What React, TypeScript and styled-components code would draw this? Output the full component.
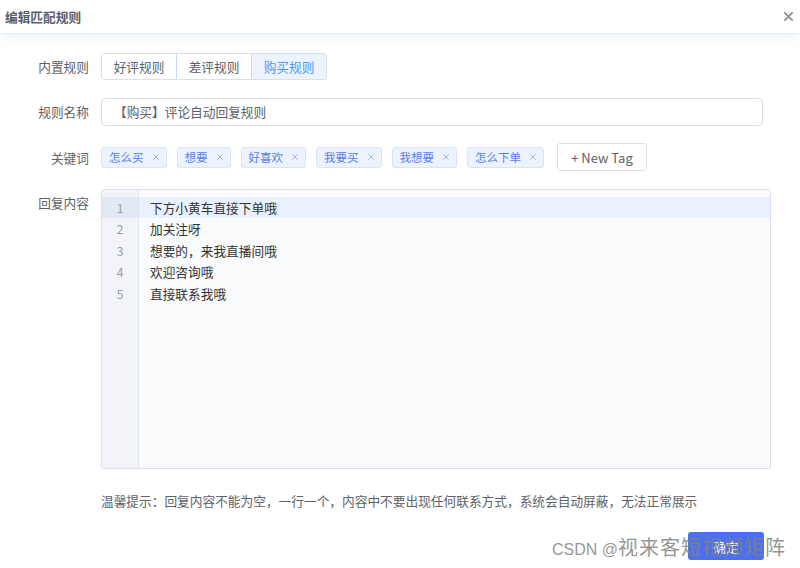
import styled, { createGlobalStyle } from 'styled-components';

const GlobalStyle = createGlobalStyle`
  html, body {
    margin: 0;
    padding: 0;
    background: #fff;
  }
  body {
    font-family: "Noto Sans CJK SC", "Noto Sans", sans-serif;
    font-size: 12.7px;
    color: #606266;
  }
`;

const rules = ['好评规则', '差评规则', '购买规则'];
const keywords = ['怎么买', '想要', '好喜欢', '我要买', '我想要', '怎么下单'];
const lines = ['下方小黄车直接下单哦', '加关注呀', '想要的，来我直播间哦', '欢迎咨询哦', '直接联系我哦'];

const CloseIcon = ({ size = 10, color = '#9a9a9a', width = 1.6 }: { size?: number; color?: string; width?: number }) => (
  <svg width={size} height={size} viewBox="0 0 10 10">
    <path d="M1 1 L9 9 M9 1 L1 9" stroke={color} strokeWidth={width} strokeLinecap="round" />
  </svg>
);

const App = () => {
  return (
    <Dialog>
      <GlobalStyle />
      <Header>
        <Title>编辑匹配规则</Title>
        <CloseIcon size={9} color="#8e8e8e" width={2} />
      </Header>

      <Body>
        <Row>
          <Label>内置规则</Label>
          <RadioGroup>
            {rules.map((r, i) => (
              <RadioButton key={r} $active={i === 2}>{r}</RadioButton>
            ))}
          </RadioGroup>
        </Row>

        <Row>
          <Label>规则名称</Label>
          <Input>【购买】评论自动回复规则</Input>
        </Row>

        <Row>
          <Label>关键词</Label>
          <Tags>
            {keywords.map((k) => (
              <Tag key={k}>
                {k}
                <CloseIcon size={6} color="#8ea4d9" width={1.3} />
              </Tag>
            ))}
            <NewTag>+ New Tag</NewTag>
          </Tags>
        </Row>

        <Row $top>
          <Label>回复内容</Label>
          <Editor>
            <Gutter>
              {lines.map((_, i) => (
                <LineNo key={i} $active={i === 0}>{i + 1}</LineNo>
              ))}
            </Gutter>
            <Content>
              {lines.map((l, i) => (
                <Line key={i} $active={i === 0}>{l}</Line>
              ))}
            </Content>
          </Editor>
        </Row>

        <Hint>温馨提示：回复内容不能为空，一行一个，内容中不要出现任何联系方式，系统会自动屏蔽，无法正常展示</Hint>
      </Body>

      <Footer>
        <PrimaryButton>确定</PrimaryButton>
      </Footer>

      <Watermark>
        <Latin>CSDN @</Latin>视来客短视频矩阵
      </Watermark>
    </Dialog>
  );
};

const Dialog = styled.div`
  position: relative;
  width: 800px;
  height: 568px;
  display: flex;
  flex-direction: column;
  overflow: hidden;
`;

const Header = styled.div`
  height: 33px;
  padding: 0 7px 0 5px;
  display: flex;
  align-items: center;
  justify-content: space-between;
  border-bottom: 1px solid #e4edfb;
  box-shadow: 0 3px 8px rgba(225, 234, 250, 0.6);
`;

const Title = styled.div`
  font-size: 12.7px;
  font-weight: bold;
  color: #5b5f6b;
`;

const Body = styled.div`
  padding: 19px 0 0;
  display: flex;
  flex-direction: column;
  gap: 17.5px;
`;

const Row = styled.div<{ $top?: boolean }>`
  display: flex;
  align-items: ${(p) => (p.$top ? 'flex-start' : 'center')};
`;

const Label = styled.div`
  width: 89px;
  margin-right: 12px;
  text-align: right;
  color: #606266;
  line-height: 27px;
  flex-shrink: 0;
`;

const RadioGroup = styled.div`
  display: flex;
  border: 1px solid #dcdfe6;
  border-radius: 3px;
  overflow: hidden;
`;

const RadioButton = styled.div<{ $active?: boolean }>`
  width: 74px;
  height: 25px;
  display: flex;
  align-items: center;
  justify-content: center;
  color: ${(p) => (p.$active ? '#4c9bf5' : '#606266')};
  background: ${(p) => (p.$active ? '#ecf2fe' : '#fff')};
  & + & {
    border-left: 1px solid ${(p) => (p.$active ? '#c8d8f8' : '#dcdfe6')};
  }
`;

const Input = styled.div`
  width: 662px;
  height: 28px;
  box-sizing: border-box;
  border: 1px solid #dcdfe6;
  border-radius: 4px;
  padding: 0 12px;
  display: flex;
  align-items: center;
  color: #606266;
`;

const Tags = styled.div`
  display: flex;
  align-items: center;
  gap: 10px;
`;

const Tag = styled.div`
  height: 21px;
  box-sizing: border-box;
  display: flex;
  align-items: center;
  gap: 9px;
  padding: 0 7px;
  background: #ecf2fe;
  border: 1px solid #d9e4fb;
  border-radius: 3px;
  color: #5a80e8;
  font-size: 11.5px;
`;

const NewTag = styled.div`
  height: 28px;
  width: 90px;
  box-sizing: border-box;
  margin-left: 3px;
  display: flex;
  align-items: center;
  justify-content: center;
  border: 1px solid #dcdfe6;
  border-radius: 3px;
  color: #5f6166;
  font-size: 13px;
`;

const Editor = styled.div`
  width: 670px;
  height: 280px;
  box-sizing: border-box;
  border: 1px solid #dde1ea;
  border-radius: 3px;
  background: #fafbfc;
  display: flex;
  overflow: hidden;
`;

const Gutter = styled.div`
  width: 36px;
  flex-shrink: 0;
  padding-top: 7px;
  background: #f3f4f9;
  border-right: 1px solid #e1e4ee;
`;

const LineNo = styled.div<{ $active?: boolean }>`
  height: 21.5px;
  line-height: 21.5px;
  text-align: center;
  font-size: 12px;
  color: #9a9ca3;
  background: ${(p) => (p.$active ? '#e3e9f4' : 'transparent')};
`;

const Content = styled.div`
  flex: 1;
  padding-top: 7px;
`;

const Line = styled.div<{ $active?: boolean }>`
  height: 21.5px;
  line-height: 21.5px;
  padding-left: 11px;
  color: #333;
  background: ${(p) => (p.$active ? '#e8f1fd' : 'transparent')};
`;

const Hint = styled.div`
  margin-top: 5px;
  padding-left: 101px;
  color: #606266;
`;

const Footer = styled.div`
  margin-top: auto;
  padding: 0 36px 8px 0;
  display: flex;
  justify-content: flex-end;
`;

const PrimaryButton = styled.div`
  width: 76px;
  height: 28px;
  display: flex;
  align-items: center;
  justify-content: center;
  background: #4b6ff0;
  border-radius: 3px;
  color: #fff;
`;

const Watermark = styled.div`
  position: absolute;
  right: 14px;
  bottom: 7px;
  font-size: 20px;
  letter-spacing: 1px;
  color: rgba(130, 130, 130, 0.85);
  pointer-events: none;
  white-space: nowrap;
`;

const Latin = styled.span`
  font-family: "Liberation Sans", sans-serif;
  font-size: 16px;
  letter-spacing: 0;
`;

export default App;
